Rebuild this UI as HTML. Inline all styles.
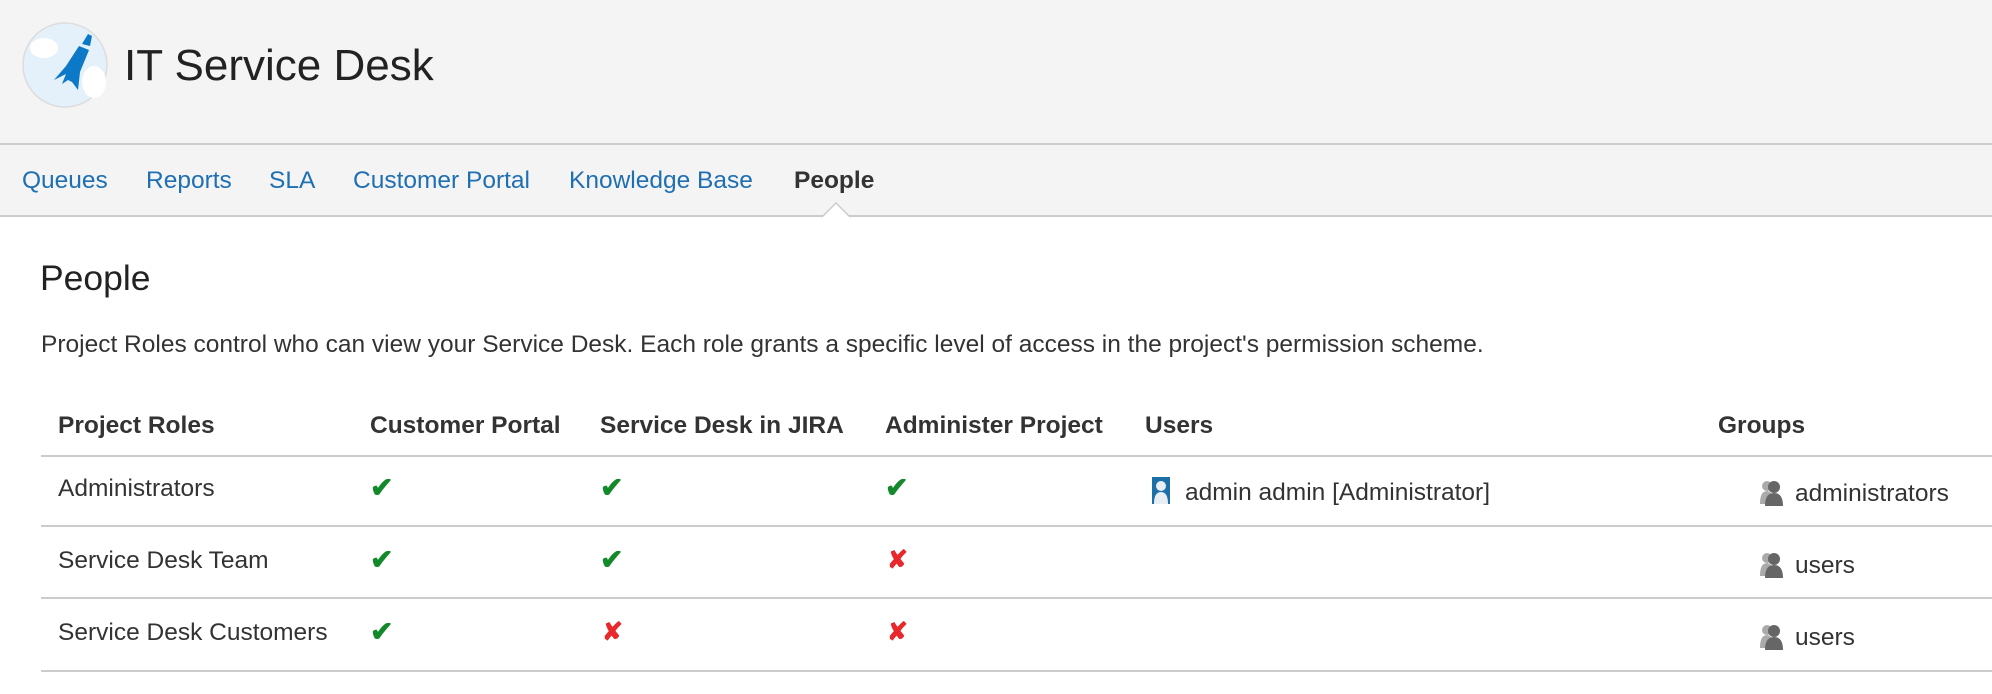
<!DOCTYPE html>
<html><head><meta charset="utf-8"><style>
body{margin:0;width:1992px;height:694px;background:#fff;font-family:"Liberation Sans",Arial,sans-serif;color:#333;position:relative;overflow:hidden}
.a{position:absolute;white-space:nowrap}
.hdr{position:absolute;left:0;top:0;width:1992px;height:216px;background:#f4f4f4}
.nav{font-size:24.5px;color:#1f6fb2;top:167px}
.th{font-weight:bold;font-size:24.5px;top:412px;color:#333}
.td{font-size:24.5px;color:#333}
.line{position:absolute;left:41px;right:0;height:2px;background:#ccc}
.ck{color:#14892c;font-size:28px;font-weight:bold}
.x{color:#e8282b;font-size:25px;font-weight:bold}
</style></head><body>
<div class="hdr"></div>
<div style="position:absolute;left:0;top:143px;width:1992px;height:2px;background:#ccc"></div>
<div style="position:absolute;left:0;top:215px;width:1992px;height:2px;background:#ccc"></div>
<svg class="a" style="left:22px;top:22px" width="86" height="86" viewBox="0 0 86 86">
<circle cx="43" cy="43" r="42" fill="#e4f0fa" stroke="#ddd" stroke-width="1.5"/>
<ellipse cx="22" cy="26" rx="14" ry="10" fill="#fff"/>
<ellipse cx="72" cy="60" rx="12" ry="16" fill="#fff"/>
<path d="M66 12 L70 14 L68 24 L60 22 Z M57 24 L67 28 L58 50 L56 68 L50 60 L46 58 L40 62 L44 52 L32 58 L44 44 Z" fill="#0b78c8"/>
</svg>
<div class="a" style="left:124px;top:41px;font-size:44px;color:#222">IT Service Desk</div>
<div class="a nav" style="left:22px">Queues</div>
<div class="a nav" style="left:146px">Reports</div>
<div class="a nav" style="left:269px">SLA</div>
<div class="a nav" style="left:353px">Customer Portal</div>
<div class="a nav" style="left:569px">Knowledge Base</div>
<div class="a nav" style="left:794px;color:#333;font-weight:bold">People</div>
<svg class="a" style="left:822px;top:202px" width="28" height="16"><path d="M0 15 L14 1 L28 15" fill="#fff" stroke="#ccc" stroke-width="1.5"/></svg>
<div class="a" style="left:40px;top:258px;font-size:35.5px;color:#222">People</div>
<div class="a" style="left:41px;top:331px;font-size:24.5px;color:#333">Project Roles control who can view your Service Desk. Each role grants a specific level of access in the project's permission scheme.</div>
<div class="a th" style="left:58px">Project Roles</div>
<div class="a th" style="left:370px">Customer Portal</div>
<div class="a th" style="left:600px">Service Desk in JIRA</div>
<div class="a th" style="left:885px">Administer Project</div>
<div class="a th" style="left:1145px">Users</div>
<div class="a th" style="left:1718px">Groups</div>
<div class="line" style="top:455px"></div>
<div class="line" style="top:525px"></div>
<div class="line" style="top:597px"></div>
<div class="line" style="top:670px"></div>
<div class="a td" style="left:58px;top:475px">Administrators</div>
<div class="a td" style="left:58px;top:547px">Service Desk Team</div>
<div class="a td" style="left:58px;top:619px">Service Desk Customers</div>
<div class="a ck" style="left:370px;top:471px">✔</div>
<div class="a ck" style="left:600px;top:471px">✔</div>
<div class="a ck" style="left:885px;top:471px">✔</div>
<div class="a ck" style="left:370px;top:543px">✔</div>
<div class="a ck" style="left:600px;top:543px">✔</div>
<div class="a x" style="left:887px;top:545px">✘</div>
<div class="a ck" style="left:370px;top:615px">✔</div>
<div class="a x" style="left:602px;top:617px">✘</div>
<div class="a x" style="left:887px;top:617px">✘</div>
<svg class="a" style="left:1152px;top:477px" width="18" height="27"><rect width="18" height="27" fill="#1d6fa8"/><circle cx="9" cy="9" r="5" fill="#e8eef3"/><path d="M2 27 Q2 15 9 15 Q16 15 16 27Z" fill="#e8eef3"/></svg>
<div class="a td" style="left:1185px;top:479px">admin admin [Administrator]</div>
<svg class="a" style="left:1759px;top:478px" width="26" height="28"><circle cx="8" cy="8" r="5" fill="#aaa"/><path d="M1 26 Q1 13 8 13 Q14 13 14 26Z" fill="#aaa"/><circle cx="15" cy="9" r="6" fill="#666"/><path d="M6 28 Q6 15 15 15 Q24 15 24 28Z" fill="#666"/></svg>
<div class="a td" style="left:1795px;top:480px">administrators</div>
<svg class="a" style="left:1759px;top:550px" width="26" height="28"><circle cx="8" cy="8" r="5" fill="#aaa"/><path d="M1 26 Q1 13 8 13 Q14 13 14 26Z" fill="#aaa"/><circle cx="15" cy="9" r="6" fill="#666"/><path d="M6 28 Q6 15 15 15 Q24 15 24 28Z" fill="#666"/></svg>
<div class="a td" style="left:1795px;top:552px">users</div>
<svg class="a" style="left:1759px;top:622px" width="26" height="28"><circle cx="8" cy="8" r="5" fill="#aaa"/><path d="M1 26 Q1 13 8 13 Q14 13 14 26Z" fill="#aaa"/><circle cx="15" cy="9" r="6" fill="#666"/><path d="M6 28 Q6 15 15 15 Q24 15 24 28Z" fill="#666"/></svg>
<div class="a td" style="left:1795px;top:624px">users</div>
</body></html>
